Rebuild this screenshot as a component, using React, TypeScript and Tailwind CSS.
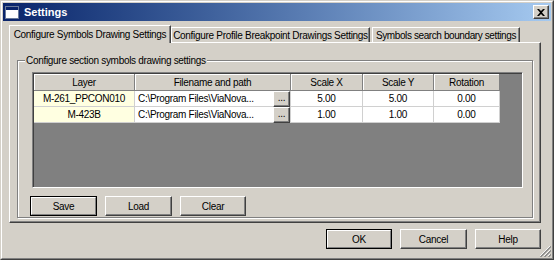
import React from "react";

const raised =
  "border border-t-white border-l-white border-r-[#404040] border-b-[#404040] shadow-[inset_-1px_-1px_0_#808080]";

function Btn({ label, def, w }: { label: string; def?: boolean; w: string }) {
  if (def) {
    return (
      <div className={`${w} h-[20px] border border-black bg-[#d4d0c8]`}>
        <div className="h-full flex items-center justify-center border border-t-white border-l-white border-r-[#808080] border-b-[#808080]">
          {label}
        </div>
      </div>
    );
  }
  return (
    <div className={`${w} h-[20px] bg-[#d4d0c8] flex items-center justify-center ${raised}`}>
      {label}
    </div>
  );
}

function HeaderCell({ w, children }: { w: string; children: React.ReactNode }) {
  return (
    <div
      className={`${w} h-full flex items-center justify-center bg-[#d4d0c8] border-r border-b border-r-[#808080] border-b-[#808080] shadow-[inset_1px_1px_0_#ffffff]`}
    >
      {children}
    </div>
  );
}

function Row({ layer, sx, sy, rot }: { layer: string; sx: string; sy: string; rot: string }) {
  return (
    <div className="flex h-[16px]">
      <div className="w-[101px] h-full flex items-center justify-center bg-[#ffffe1] border-r border-b border-[#d0d0d0]">
        {layer}
      </div>
      <div className="w-[156px] h-full flex items-center bg-white border-r border-b border-[#d0d0d0]">
        <span className="flex-1 pl-[3px] whitespace-nowrap overflow-hidden">C:\Program Files\ViaNova...</span>
        <div className={`w-[17px] h-[16px] bg-[#d4d0c8] flex items-end justify-center pb-[3px] leading-none ${raised}`}>
          ...
        </div>
      </div>
      <div className="w-[72px] h-full flex items-center justify-center bg-white border-r border-b border-[#d0d0d0]">
        {sx}
      </div>
      <div className="w-[71px] h-full flex items-center justify-center bg-white border-r border-b border-[#d0d0d0]">
        {sy}
      </div>
      <div className="w-[66px] h-full flex items-center justify-center bg-white border-r border-b border-[#d0d0d0]">
        {rot}
      </div>
    </div>
  );
}

export default function App() {
  return (
    <div className="relative w-[554px] h-[260px] bg-[#d4d0c8] border border-t-[#d4d0c8] border-l-[#d4d0c8] border-r-[#404040] border-b-[#404040] text-[10px] tracking-[-0.3px] text-black font-['Liberation_Sans',sans-serif] select-none">
      <div className="h-full border border-t-white border-l-white border-r-[#808080] border-b-[#808080] p-px flex flex-col">
        {/* Title bar */}
        <div className="h-[18px] flex items-center bg-gradient-to-r from-[#0a246a] to-[#a6caf0]">
          <div className="ml-[2px] w-[14px] h-[13px] bg-white border border-[#6a7a9a] flex flex-col">
            <div className="h-[3px] bg-[#0a246a]" />
          </div>
          <span className="ml-[5px] text-white font-bold text-[11px] tracking-normal">
            Settings
          </span>
          <div className="flex-1" />
          <div className={`w-[16px] h-[14px] mr-[2px] bg-[#d4d0c8] flex items-center justify-center ${raised}`}>
            <svg width="8" height="7" viewBox="0 0 8 7">
              <path d="M0 0h2l2 2 2-2h2L5 3.5 8 7H6L4 5 2 7H0l3-3.5z" fill="#000" />
            </svg>
          </div>
        </div>

        {/* Body */}
        <div className="px-[6px] pt-[4px] flex flex-col">
          {/* Tabs */}
          <div className="flex items-end h-[17px]">
            <div className="relative z-10 w-[162px] h-[18px] -mb-px bg-[#d4d0c8] border-t border-l border-r border-t-white border-l-white border-r-[#404040] shadow-[inset_-1px_0_0_#808080] flex items-center justify-center pb-[1px] whitespace-nowrap">
              Configure Symbols Drawing Settings
            </div>
            <div className="w-[199px] h-[15px] bg-[#d4d0c8] border-t border-l border-r border-t-white border-l-white border-r-[#404040] shadow-[inset_-1px_0_0_#808080] flex items-center justify-center whitespace-nowrap">
              Configure Profile Breakpoint Drawings Settings
            </div>
            <div className="ml-[2px] w-[148px] h-[15px] bg-[#d4d0c8] border-t border-l border-r border-t-white border-l-white border-r-[#404040] shadow-[inset_-1px_0_0_#808080] flex items-center justify-center whitespace-nowrap tracking-[-0.4px]">
              Symbols search boundary settings
            </div>
          </div>

          {/* Panel */}
          <div className={`w-[532px] h-[181px] bg-[#d4d0c8] pt-[11px] pl-[7px] pr-[7px] ${raised}`}>
            <fieldset className="border border-[#808080] shadow-[inset_1px_1px_0_#ffffff,1px_1px_0_#ffffff] pl-[14px] pr-[9px] pb-[1px]">
              <legend className="-ml-[7px] px-[1px] bg-[#d4d0c8] leading-[13px]">
                Configure section symbols drawing settings
              </legend>
              <div className="mt-[5px] w-[491px] h-[116px] bg-[#808080] border border-t-[#808080] border-l-[#808080] border-r-white border-b-white shadow-[inset_1px_1px_0_#404040] pt-px pl-px">
                <div className="flex h-[17px]">
                  <HeaderCell w="w-[101px]">Layer</HeaderCell>
                  <HeaderCell w="w-[156px]">Filename and path</HeaderCell>
                  <HeaderCell w="w-[72px]">Scale X</HeaderCell>
                  <HeaderCell w="w-[71px]">Scale Y</HeaderCell>
                  <HeaderCell w="w-[66px]">Rotation</HeaderCell>
                </div>
                <Row layer="M-261_PPCON010" sx="5.00" sy="5.00" rot="0.00" />
                <Row layer="M-423B" sx="1.00" sy="1.00" rot="0.00" />
              </div>
              <div className="flex gap-[8px] mt-[8px] -ml-[2px]">
                <Btn label="Save" def w="w-[67px]" />
                <Btn label="Load" w="w-[67px]" />
                <Btn label="Clear" w="w-[66px]" />
              </div>
            </fieldset>
          </div>

          {/* Bottom buttons */}
          <div className="w-[532px] flex justify-end gap-[8px] mt-[6px]">
            <Btn label="OK" def w="w-[66px]" />
            <Btn label="Cancel" w="w-[67px]" />
            <Btn label="Help" w="w-[66px]" />
          </div>
        </div>
      </div>

      {/* Size grip */}
      <svg className="absolute right-[2px] bottom-[2px]" width="12" height="12" viewBox="0 0 12 12">
        <path d="M11 1L1 11M11 5L5 11M11 9L9 11" stroke="#ffffff" strokeWidth="1" />
        <path d="M12 1.5L1.5 12M12 5.5L5.5 12M12 9.5L9.5 12" stroke="#808080" strokeWidth="1.2" />
      </svg>
    </div>
  );
}
